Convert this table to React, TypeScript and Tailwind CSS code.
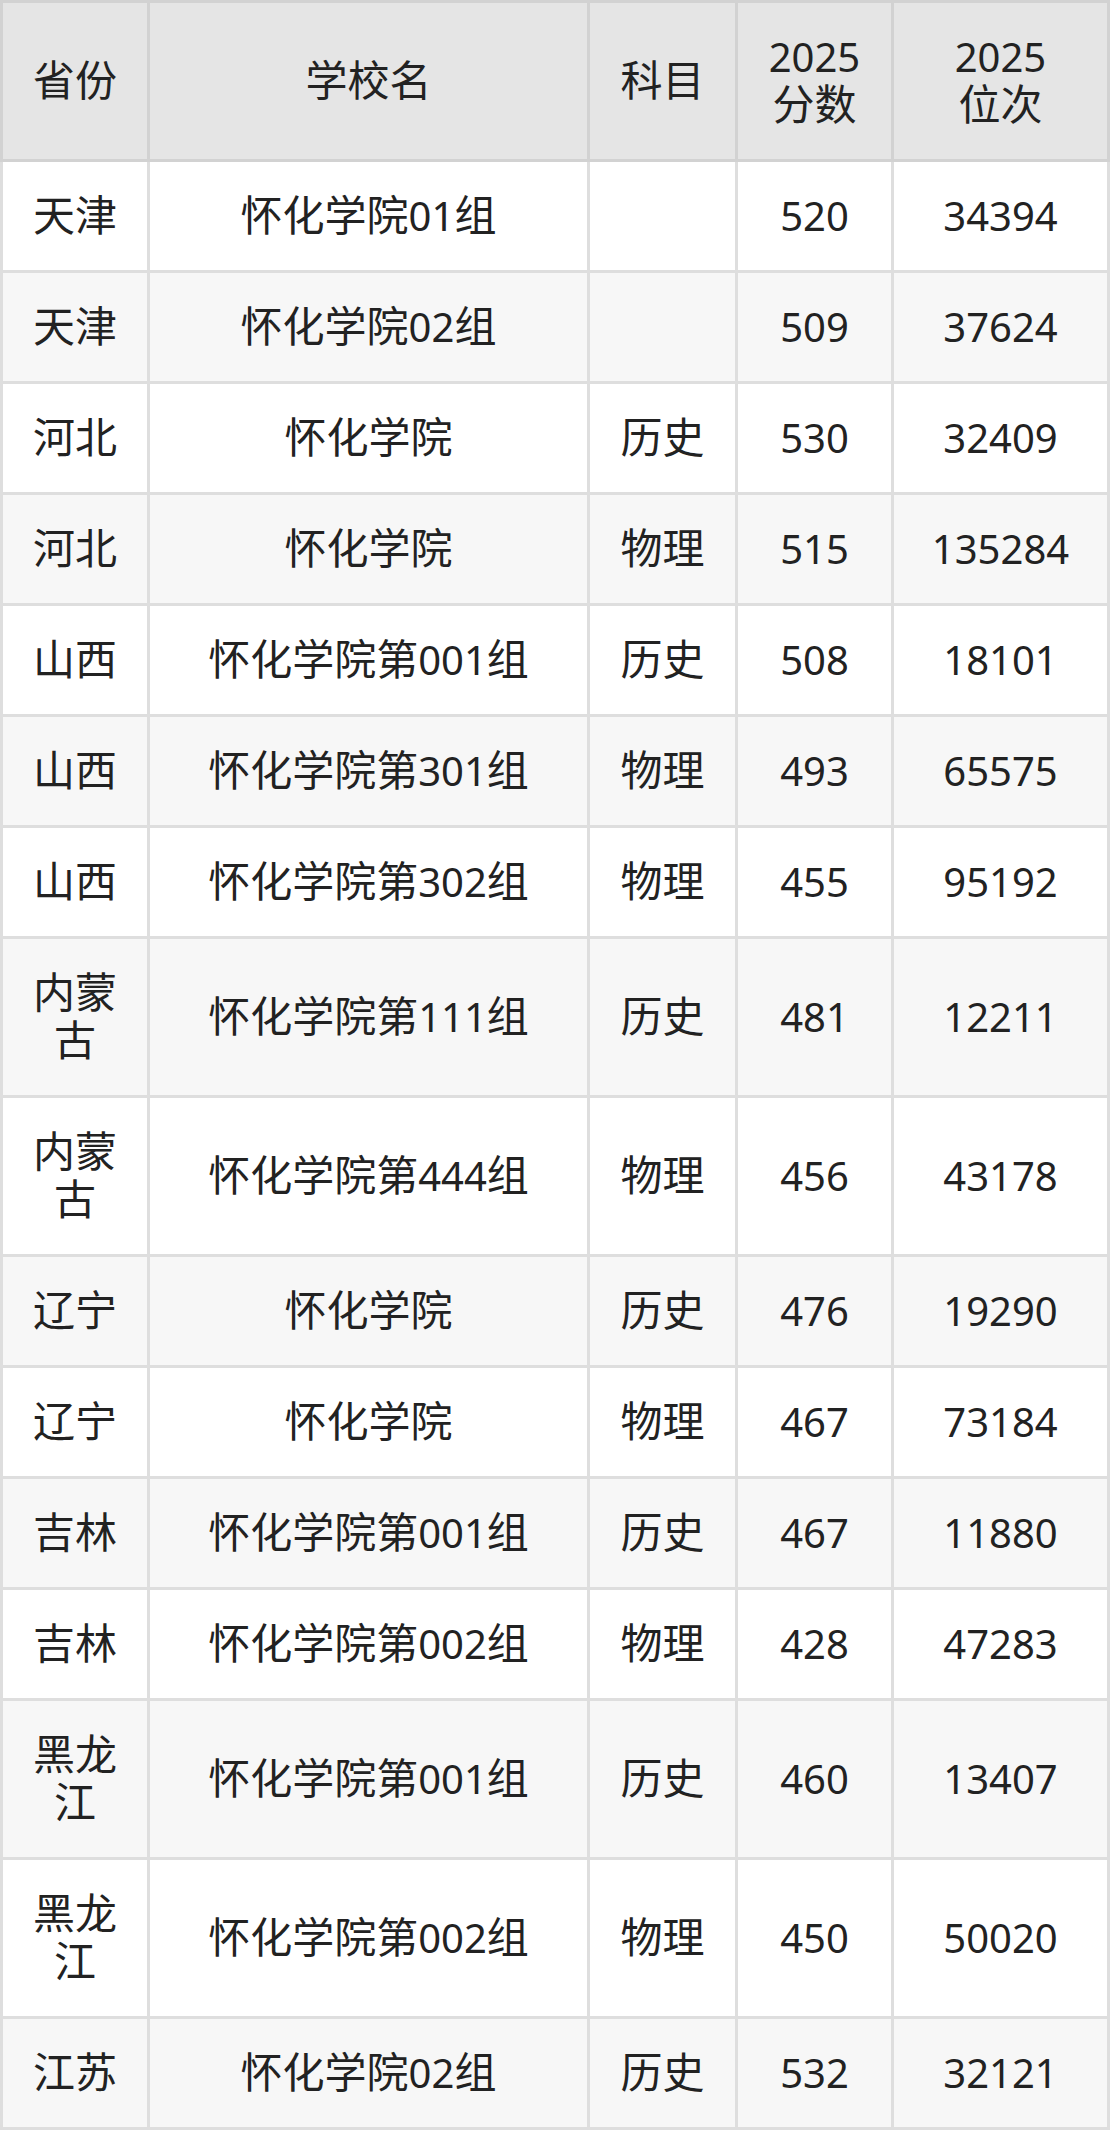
import React from "react";

type Row = { p: string; s: string; k: string; f: string; w: string };

const rows: Row[] = [
  { p: "天津", s: "怀化学院01组", k: "", f: "520", w: "34394" },
  { p: "天津", s: "怀化学院02组", k: "", f: "509", w: "37624" },
  { p: "河北", s: "怀化学院", k: "历史", f: "530", w: "32409" },
  { p: "河北", s: "怀化学院", k: "物理", f: "515", w: "135284" },
  { p: "山西", s: "怀化学院第001组", k: "历史", f: "508", w: "18101" },
  { p: "山西", s: "怀化学院第301组", k: "物理", f: "493", w: "65575" },
  { p: "山西", s: "怀化学院第302组", k: "物理", f: "455", w: "95192" },
  { p: "内蒙古", s: "怀化学院第111组", k: "历史", f: "481", w: "12211" },
  { p: "内蒙古", s: "怀化学院第444组", k: "物理", f: "456", w: "43178" },
  { p: "辽宁", s: "怀化学院", k: "历史", f: "476", w: "19290" },
  { p: "辽宁", s: "怀化学院", k: "物理", f: "467", w: "73184" },
  { p: "吉林", s: "怀化学院第001组", k: "历史", f: "467", w: "11880" },
  { p: "吉林", s: "怀化学院第002组", k: "物理", f: "428", w: "47283" },
  { p: "黑龙江", s: "怀化学院第001组", k: "历史", f: "460", w: "13407" },
  { p: "黑龙江", s: "怀化学院第002组", k: "物理", f: "450", w: "50020" },
  { p: "江苏", s: "怀化学院02组", k: "历史", f: "532", w: "32121" },
];

function T({ s }: { s: string }) {
  const parts = s.match(/[\u3400-\u9fff]+|[^\u3400-\u9fff]+/g) || [];
  return (
    <>
      {parts.map((p, i) =>
        /[\u3400-\u9fff]/.test(p) ? (
          <span key={i} className="text-[42px] leading-none">
            {p}
          </span>
        ) : (
          <React.Fragment key={i}>{p}</React.Fragment>
        )
      )}
    </>
  );
}

const th =
  "border-t-[3px] border-r-[3px] border-b-[3px] border-[#d2d2d2] bg-[#e5e5e5] px-4 py-[30px] text-center align-middle font-normal";
const td =
  "border-r-[3px] border-b-[3px] border-[#dedede] px-4 py-[30px] text-center align-middle";

export default function App() {
  return (
    <div
      className="w-[1110px] bg-white text-[#222] text-[40px] leading-[48px]"
      style={{ fontFamily: '"Noto Sans", "Noto Sans CJK SC", sans-serif' }}
    >
      <table className="w-[1110px] table-fixed border-separate border-spacing-0">
        <colgroup>
          <col className="w-[150px]" />
          <col className="w-[440px]" />
          <col className="w-[148px]" />
          <col className="w-[156px]" />
          <col className="w-[216px]" />
        </colgroup>
        <thead>
          <tr>
            <th className={th + " border-l-[3px]"}>
              <T s="省份" />
            </th>
            <th className={th}>
              <T s="学校名" />
            </th>
            <th className={th}>
              <T s="科目" />
            </th>
            <th className={th}>
              2025
              <br />
              <T s="分数" />
            </th>
            <th className={th}>
              2025
              <br />
              <T s="位次" />
            </th>
          </tr>
        </thead>
        <tbody>
          {rows.map((r, i) => (
            <tr key={i} className={i % 2 === 0 ? "bg-white" : "bg-[#f7f7f7]"}>
              <td className={td + " border-l-[3px]"}>
                <T s={r.p} />
              </td>
              <td className={td}>
                <T s={r.s} />
              </td>
              <td className={td}>
                <T s={r.k} />
              </td>
              <td className={td}>{r.f}</td>
              <td className={td}>{r.w}</td>
            </tr>
          ))}
        </tbody>
      </table>
    </div>
  );
}
